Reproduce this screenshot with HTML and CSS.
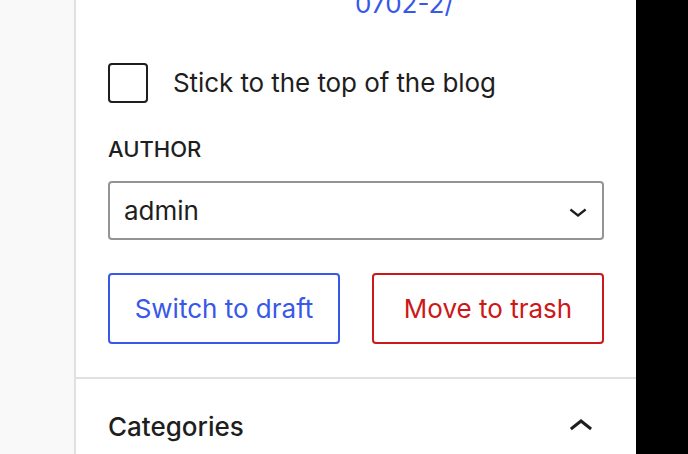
FILE: index.html
```html
<!DOCTYPE html>
<html lang="en">
<head>
<meta charset="utf-8">
<title>Post settings</title>
<link rel="stylesheet" href="styles.css">
</head>
<body>
<div class="app">
  <div class="canvas"></div>
  <aside class="sidebar">
    <section class="panel-body">
      <div class="url-row"><a class="url-link" href="#">0702-2/</a></div>
      <label class="check-row">
        <span class="checkbox"></span>
        <span class="check-label">Stick to the top of the blog</span>
      </label>
      <div class="field-label">Author</div>
      <div class="select">
        <span class="select-value">admin</span>
        <svg class="select-icon" viewBox="0 0 24 24" width="36" height="36" aria-hidden="true"><path d="M17.5 11.6L12 16l-5.5-4.4.9-1.2L12 14l4.6-3.6 1 1.2z"/></svg>
      </div>
      <div class="actions">
        <button class="btn btn-draft" type="button">Switch to draft</button>
        <button class="btn btn-trash" type="button">Move to trash</button>
      </div>
    </section>
    <section class="panel-header">
      <h2 class="panel-title">Categories</h2>
      <svg class="panel-icon" viewBox="0 0 24 24" width="48" height="48" aria-hidden="true"><path d="M6.5 12.4L12 8l5.5 4.4-.9 1.2L12 10l-4.6 3.6-1-1.2z"/></svg>
    </section>
  </aside>
  <div class="frame-edge"></div>
</div>
</body>
</html>
```

FILE: styles.css
```css
html, body {
  margin: 0;
  padding: 0;
}
body {
  font-family: "Inter", "Noto Sans", sans-serif;
  color: #1e1e1e;
  background: #000;
  overflow: hidden;
}
.app {
  display: flex;
  height: 454px;
  overflow: hidden;
}
.canvas {
  width: 74px;
  flex: none;
  background: #f9f9f9;
  border-right: 2px solid #e0e0e0;
}
.sidebar {
  width: 560px;
  flex: none;
  background: #fff;
  display: flex;
  flex-direction: column;
}
.frame-edge {
  flex: 1;
  background: #000;
}
.panel-body {
  padding: 0 32px 33px;
  border-bottom: 2px solid #e0e0e0;
  display: flex;
  flex-direction: column;
}
.url-row {
  margin-top: -12px;
  padding-left: 247px;
  font-size: 26px;
  line-height: 31px;
}
.url-link {
  color: #3858e9;
  text-decoration: none;
}
.check-row {
  display: flex;
  align-items: center;
  gap: 25px;
  margin-top: 44px;
  height: 40px;
}
.checkbox {
  width: 40px;
  height: 40px;
  box-sizing: border-box;
  border: 2px solid #1e1e1e;
  border-radius: 4px;
  flex: none;
}
.check-label {
  font-size: 26px;
  line-height: 40px;
  letter-spacing: -0.08px;
}
.field-label {
  margin-top: 33px;
  font-size: 22px;
  line-height: 26px;
  font-weight: 500;
  text-transform: uppercase;
}
.select {
  margin-top: 19px;
  height: 59px;
  box-sizing: border-box;
  border: 2px solid #949494;
  border-radius: 4px;
  display: flex;
  align-items: center;
  justify-content: space-between;
  padding: 0 6px 0 14px;
}
.select-value {
  font-size: 26px;
}
.select-icon {
  fill: #1e1e1e;
}
.actions {
  display: flex;
  gap: 32px;
  margin-top: 33px;
}
.btn {
  width: 232px;
  height: 71px;
  box-sizing: border-box;
  background: #fff;
  border-radius: 4px;
  font-family: inherit;
  font-size: 26px;
  padding: 0;
  cursor: pointer;
}
.btn-draft {
  border: 2px solid #3858e9;
  color: #3858e9;
}
.btn-trash {
  border: 2px solid #cc1818;
  color: #cc1818;
}
.panel-header {
  display: flex;
  align-items: center;
  justify-content: space-between;
  padding: 24px 31px 0 32px;
}
.panel-title {
  margin: 0;
  font-size: 26px;
  font-weight: 500;
  line-height: 48px;
}
.panel-icon {
  fill: #1e1e1e;
}
```
